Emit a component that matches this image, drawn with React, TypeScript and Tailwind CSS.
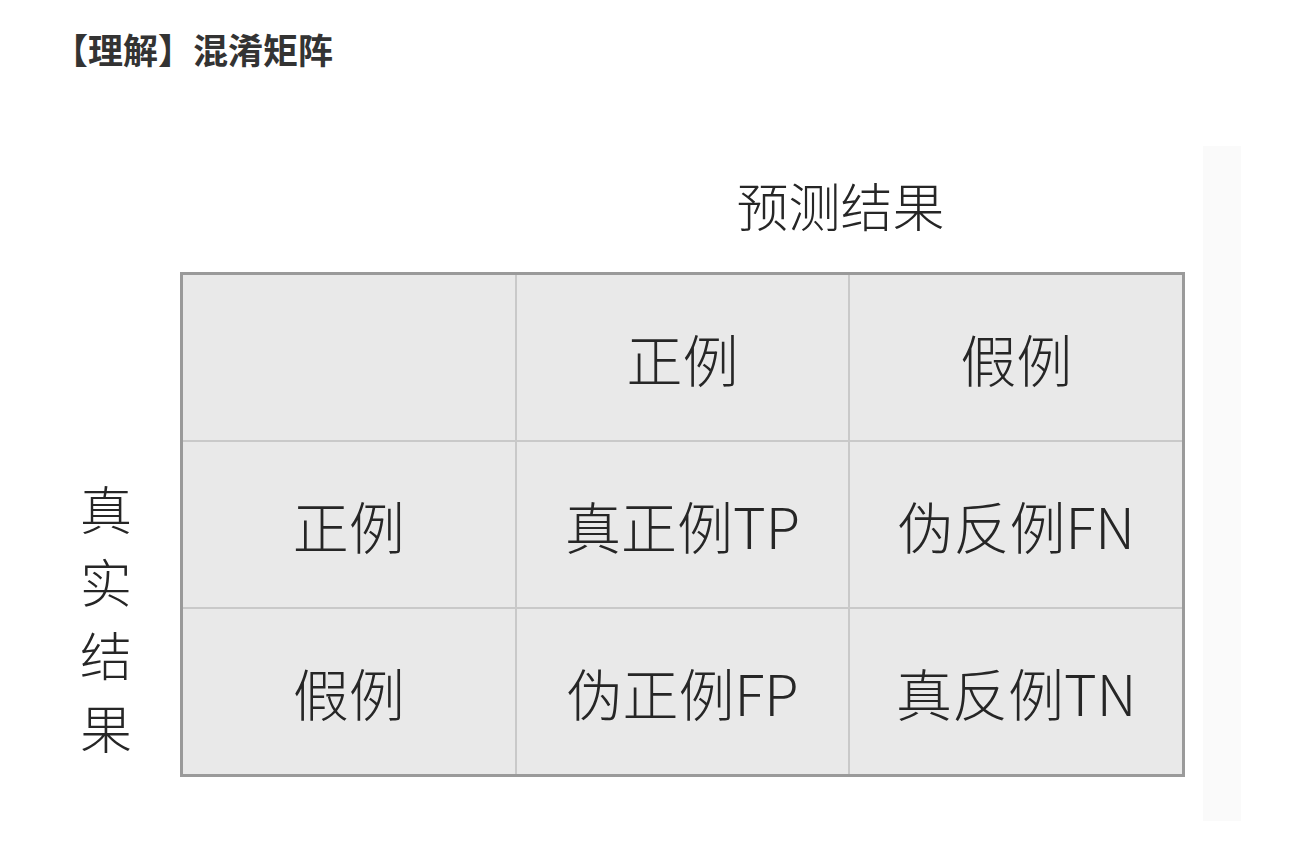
import React from "react";

const cjk = "font-['Noto_Sans_CJK_SC','Noto_Sans',sans-serif]";

function Cell({ children, className = "" }: { children?: React.ReactNode; className?: string }) {
  return (
    <div className={`flex items-center justify-center bg-[#e9e9e9] text-[56px] leading-none text-[#262626] font-light ${className}`}>
      {children}
    </div>
  );
}

export default function App() {
  return (
    <div className={`w-[1303px] h-[842px] bg-white ${cjk} overflow-hidden`}>
      <div className="pl-[53px] pt-[26px]">
        <h1 className="text-[35px] leading-[45px] font-bold text-[#333333]">【理解】混淆矩阵</h1>
      </div>
      <div className="flex mt-[75px] ml-[60px]">
        <div className="w-[1143px] h-[675px] flex flex-col">
          <div className="flex pt-[30px]">
            <div className="w-[120px]" />
            <div className="w-[1005px] pl-[316px] text-center text-[52px] leading-[58px] font-light text-[#262626]">
              预测结果
            </div>
          </div>
          <div className="flex mt-[38px]">
            <div className="w-[120px] pl-[20px] pt-[199px] flex flex-col">
              {["真", "实", "结", "果"].map((c) => (
                <div key={c} className="w-[52px] text-center text-[52px] leading-[73px] font-light text-[#262626]">
                  {c}
                </div>
              ))}
            </div>
            <div className="w-[1005px] h-[505px] border-[3px] border-[#9a9a9a] bg-[#c9c9c9] grid grid-cols-3 grid-rows-3 gap-[2px]">
              <Cell />
              <Cell>正例</Cell>
              <Cell>假例</Cell>
              <Cell>正例</Cell>
              <Cell>真正例TP</Cell>
              <Cell>伪反例FN</Cell>
              <Cell>假例</Cell>
              <Cell>伪正例FP</Cell>
              <Cell>真反例TN</Cell>
            </div>
          </div>
        </div>
        <div className="w-[38px] h-[675px] bg-[#fafafa]" />
      </div>
    </div>
  );
}
